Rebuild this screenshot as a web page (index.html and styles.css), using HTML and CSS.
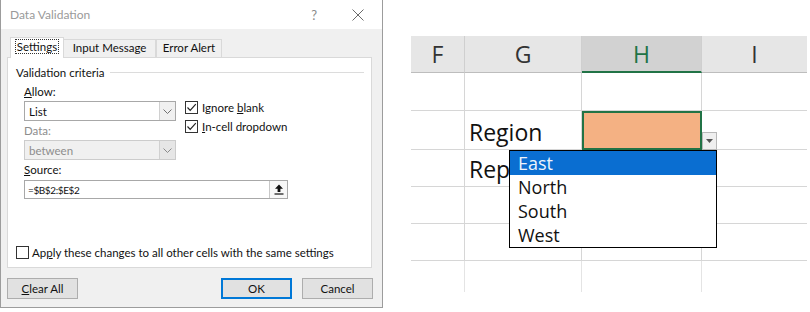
FILE: index.html
```html
<!DOCTYPE html>
<html lang="en">

<head>
    <meta charset="UTF-8">
    <title>Data Validation</title>
    <link rel="stylesheet" href="styles.css">
</head>

<body>
    <div class="dialog">
        <div class="titlebar">
            <span class="title">Data Validation</span>
            <span class="help">?</span>
            <svg class="close" width="12" height="12" viewBox="0 0 12 12">
                <path d="M0.5 0.5 L11.5 11.5 M11.5 0.5 L0.5 11.5" stroke="#6a6a6a" stroke-width="1" fill="none" />
            </svg>
        </div>
        <div class="tabs">
            <div class="tab tab-settings active"><span class="focus">Settings</span></div>
            <div class="tab tab-input">Input Message</div>
            <div class="tab tab-error">Error Alert</div>
        </div>
        <div class="panel">
            <div class="group"><span>Validation criteria</span></div>
            <div class="field-label allow-label"><u>A</u>llow:</div>
            <div class="criteria-row">
                <div class="left-col">
                    <div class="combo">
                        <span>List</span>
                        <span class="combo-btn">
                            <svg width="9" height="5" viewBox="0 0 9 5"><path d="M0.5 0.5 L4.5 4.5 L8.5 0.5" stroke="#707070" fill="none" /></svg>
                        </span>
                    </div>
                    <div class="field-label disabled-label">Data:</div>
                    <div class="combo disabled">
                        <span>between</span>
                        <span class="combo-btn">
                            <svg width="9" height="5" viewBox="0 0 9 5"><path d="M0.5 0.5 L4.5 4.5 L8.5 0.5" stroke="#8a8a8a" fill="none" /></svg>
                        </span>
                    </div>
                </div>
                <div class="checks">
                    <div class="check">
                        <span class="box">
                            <svg width="11" height="11" viewBox="0 0 11 11"><path d="M1.5 5.5 L4.2 8.3 L9.8 2.2" stroke="#222" stroke-width="1.2" fill="none" /></svg>
                        </span>
                        <span>Ignore <u>b</u>lank</span>
                    </div>
                    <div class="check">
                        <span class="box">
                            <svg width="11" height="11" viewBox="0 0 11 11"><path d="M1.5 5.5 L4.2 8.3 L9.8 2.2" stroke="#222" stroke-width="1.2" fill="none" /></svg>
                        </span>
                        <span><u>I</u>n-cell dropdown</span>
                    </div>
                </div>
            </div>
            <div class="field-label source-label"><u>S</u>ource:</div>
            <div class="source">
                <span class="formula">=$B$2:$E$2</span>
                <span class="ref-btn">
                    <svg width="10" height="11" viewBox="0 0 10 11">
                        <path d="M5 0.5 L9 4.8 L6.4 4.8 L6.4 8 L3.6 8 L3.6 4.8 L1 4.8 Z" fill="#111" />
                        <path d="M0.5 10 L9.5 10" stroke="#111" stroke-width="1.2" />
                    </svg>
                </span>
            </div>
            <div class="check apply">
                <span class="box"></span>
                <span>Ap<u>p</u>ly these changes to all other cells with the same settings</span>
            </div>
        </div>
        <div class="buttons">
            <div class="btn"><u>C</u>lear All</div>
            <div class="btn ok">OK</div>
            <div class="btn cancel">Cancel</div>
        </div>
    </div>

    <div class="sheet">
        <div class="cell head">F</div>
        <div class="cell head">G</div>
        <div class="cell head head-active">H</div>
        <div class="cell head last-col">I</div>

        <div class="cell"></div>
        <div class="cell"></div>
        <div class="cell"></div>
        <div class="cell last-col"></div>

        <div class="cell"></div>
        <div class="cell text">Region</div>
        <div class="cell selected"></div>
        <div class="cell last-col"></div>

        <div class="cell"></div>
        <div class="cell text">Rep</div>
        <div class="cell"></div>
        <div class="cell last-col"></div>

        <div class="cell"></div>
        <div class="cell"></div>
        <div class="cell"></div>
        <div class="cell last-col"></div>

        <div class="cell"></div>
        <div class="cell"></div>
        <div class="cell"></div>
        <div class="cell last-col"></div>

        <div class="cell tail"></div>
        <div class="cell tail"></div>
        <div class="cell tail"></div>
        <div class="cell tail last-col"></div>

        <div class="drop-btn">
            <svg width="7" height="4" viewBox="0 0 7 4"><path d="M0 0 L7 0 L3.5 4 Z" fill="#555" /></svg>
        </div>
        <div class="dropdown">
            <div class="item picked">East</div>
            <div class="item">North</div>
            <div class="item">South</div>
            <div class="item">West</div>
        </div>
    </div>
</body>

</html>
```

FILE: styles.css
```css
* {
    margin: 0;
    padding: 0;
    box-sizing: border-box;
}

body {
    display: flex;
    align-items: flex-start;
    width: 810px;
    height: 312px;
    overflow: hidden;
    background: #fff;
    font-family: Lato, "Noto Sans", sans-serif;
}

u {
    text-decoration: underline;
    text-underline-offset: 1px;
}

/* dialog */

.dialog {
    display: flex;
    flex-direction: column;
    width: 383px;
    height: 308px;
    background: #f0f0f0;
    border: 1px solid #9c9c9c;
    border-top: none;
    font-size: 11.5px;
    color: #111;
    white-space: nowrap;
}

.titlebar {
    display: flex;
    align-items: center;
    height: 29px;
    padding-left: 9px;
    background: #fff;
}

.title {
    flex: 1;
    color: #9a9a9a;
    font-size: 12px;
}

.help {
    color: #8a8a8a;
    font-size: 13px;
    margin-right: 35px;
}

.close {
    margin-right: 18px;
}

.tabs {
    display: flex;
    height: 28px;
    padding: 8px 0 0 9px;
}

.tab {
    height: 18px;
    margin-top: 2px;
    border: 1px solid #d9d9d9;
    border-bottom: none;
    text-align: center;
    line-height: 16px;
}

.tab.active {
    position: relative;
    z-index: 1;
    height: 21px;
    margin-top: 0;
    background: #fff;
    line-height: 18px;
}

.focus {
    padding: 0 1px;
    outline: 1px dotted #333;
}

.tab-settings {
    width: 54px;
}

.tab-input {
    width: 93px;
    margin-left: -1px;
}

.tab-error {
    width: 66px;
}

.panel {
    display: flex;
    flex-direction: column;
    width: 365px;
    height: 211px;
    margin-left: 6px;
    padding: 7px 7px 7px 8px;
    background: #fff;
    border: 1px solid #d9d9d9;
}

.group {
    display: flex;
    align-items: center;
    height: 15px;
}

.group::after {
    content: "";
    flex: 1;
    margin-left: 6px;
    border-top: 1px solid #dcdcdc;
}

.field-label {
    height: 16px;
    margin-left: 8px;
    line-height: 16px;
}

.allow-label {
    margin-top: 4px;
}

.disabled-label {
    margin-top: 2px;
    margin-left: 0;
    color: #8d8d8d;
}

.source-label {
    margin-top: 2px;
}

.criteria-row {
    display: flex;
    margin-top: 1px;
    margin-left: 8px;
}

.left-col {
    width: 152px;
}

.combo {
    display: flex;
    align-items: center;
    height: 20px;
    padding-left: 4px;
    border: 1px solid #a8a8a8;
    background: #fff;
}

.combo.disabled {
    margin-top: 1px;
    border-color: #cccccc;
    background: #f0f0f0;
    color: #8d8d8d;
}

.combo-btn {
    display: flex;
    align-items: center;
    justify-content: center;
    width: 16px;
    height: 100%;
    margin-left: auto;
    border-left: 1px solid #d0d0d0;
    background: #f0f0f0;
}

.combo.disabled .combo-btn {
    background: #e6e6e6;
}

.checks {
    margin-left: 9px;
}

.check {
    display: flex;
    align-items: center;
    height: 19px;
}

.checks .check:first-child {
    margin-top: -3px;
}

.box {
    display: flex;
    align-items: center;
    justify-content: center;
    width: 13px;
    height: 13px;
    margin-right: 4px;
    border: 1px solid #333;
    background: #fff;
}

.source {
    display: flex;
    align-items: center;
    width: 264px;
    height: 19px;
    margin-top: 2px;
    margin-left: 8px;
    padding-left: 3px;
    border: 1px solid #a8a8a8;
}

.formula {
    font-size: 10px;
    letter-spacing: -0.4px;
}

.ref-btn {
    display: flex;
    align-items: center;
    justify-content: center;
    width: 18px;
    height: 100%;
    margin-left: auto;
    border-left: 1px solid #c8c8c8;
    background: #f7f7f7;
}

.apply {
    margin-top: auto;
    height: 16px;
}

.apply .box {
    margin-right: 3px;
}

.buttons {
    display: flex;
    margin-top: 10px;
    padding: 0 9px 0 6px;
}

.btn {
    width: 71px;
    height: 21px;
    border: 1px solid #adadad;
    background: #e1e1e1;
    text-align: center;
    line-height: 19px;
}

.ok {
    margin-left: auto;
    border: 2px solid #0078d7;
    line-height: 17px;
}

.cancel {
    margin-left: 10px;
}

/* sheet */

.sheet {
    position: relative;
    display: grid;
    grid-template-columns: 54px 117px 120px 105px;
    grid-template-rows: 37px 38px 39px 37px 37px 37px 31px;
    margin-top: 36px;
    margin-left: 28px;
    font-family: "Open Sans", sans-serif;
    color: #111;
}

.cell {
    border-right: 1px solid #d6d6d6;
    border-bottom: 1px solid #d6d6d6;
}

.cell.last-col {
    border-right: none;
}

.cell.tail {
    border-bottom: none;
    border-right-color: #e4e4e4;
}

.head {
    display: flex;
    align-items: center;
    justify-content: center;
    background: #e6e6e6;
    border-right-color: #cfcfcf;
    border-bottom-color: #bdbdbd;
    font-size: 23px;
    color: #333;
}

.head-active {
    background: #d2d2d2;
    border-bottom: 2px solid #217346;
    color: #217346;
}

.text {
    display: flex;
    align-items: flex-end;
    padding: 0 0 1px 4px;
    font-size: 23px;
    white-space: nowrap;
}

.selected {
    background: #f4b183;
    border: 2px solid #217346;
}

.drop-btn {
    position: absolute;
    left: 291px;
    top: 96px;
    display: flex;
    align-items: center;
    justify-content: center;
    width: 15px;
    height: 18px;
    background: #efefef;
    border: 1px solid #b8b8b8;
}

.dropdown {
    position: absolute;
    left: 98px;
    top: 114px;
    width: 208px;
    height: 98px;
    background: #fff;
    border: 1px solid #000;
    font-size: 18px;
}

.item {
    height: 24px;
    padding: 1px 0 0 8px;
    line-height: 23px;
}

.item.picked {
    background: #0a6ed1;
    color: #eef4fc;
}
```
